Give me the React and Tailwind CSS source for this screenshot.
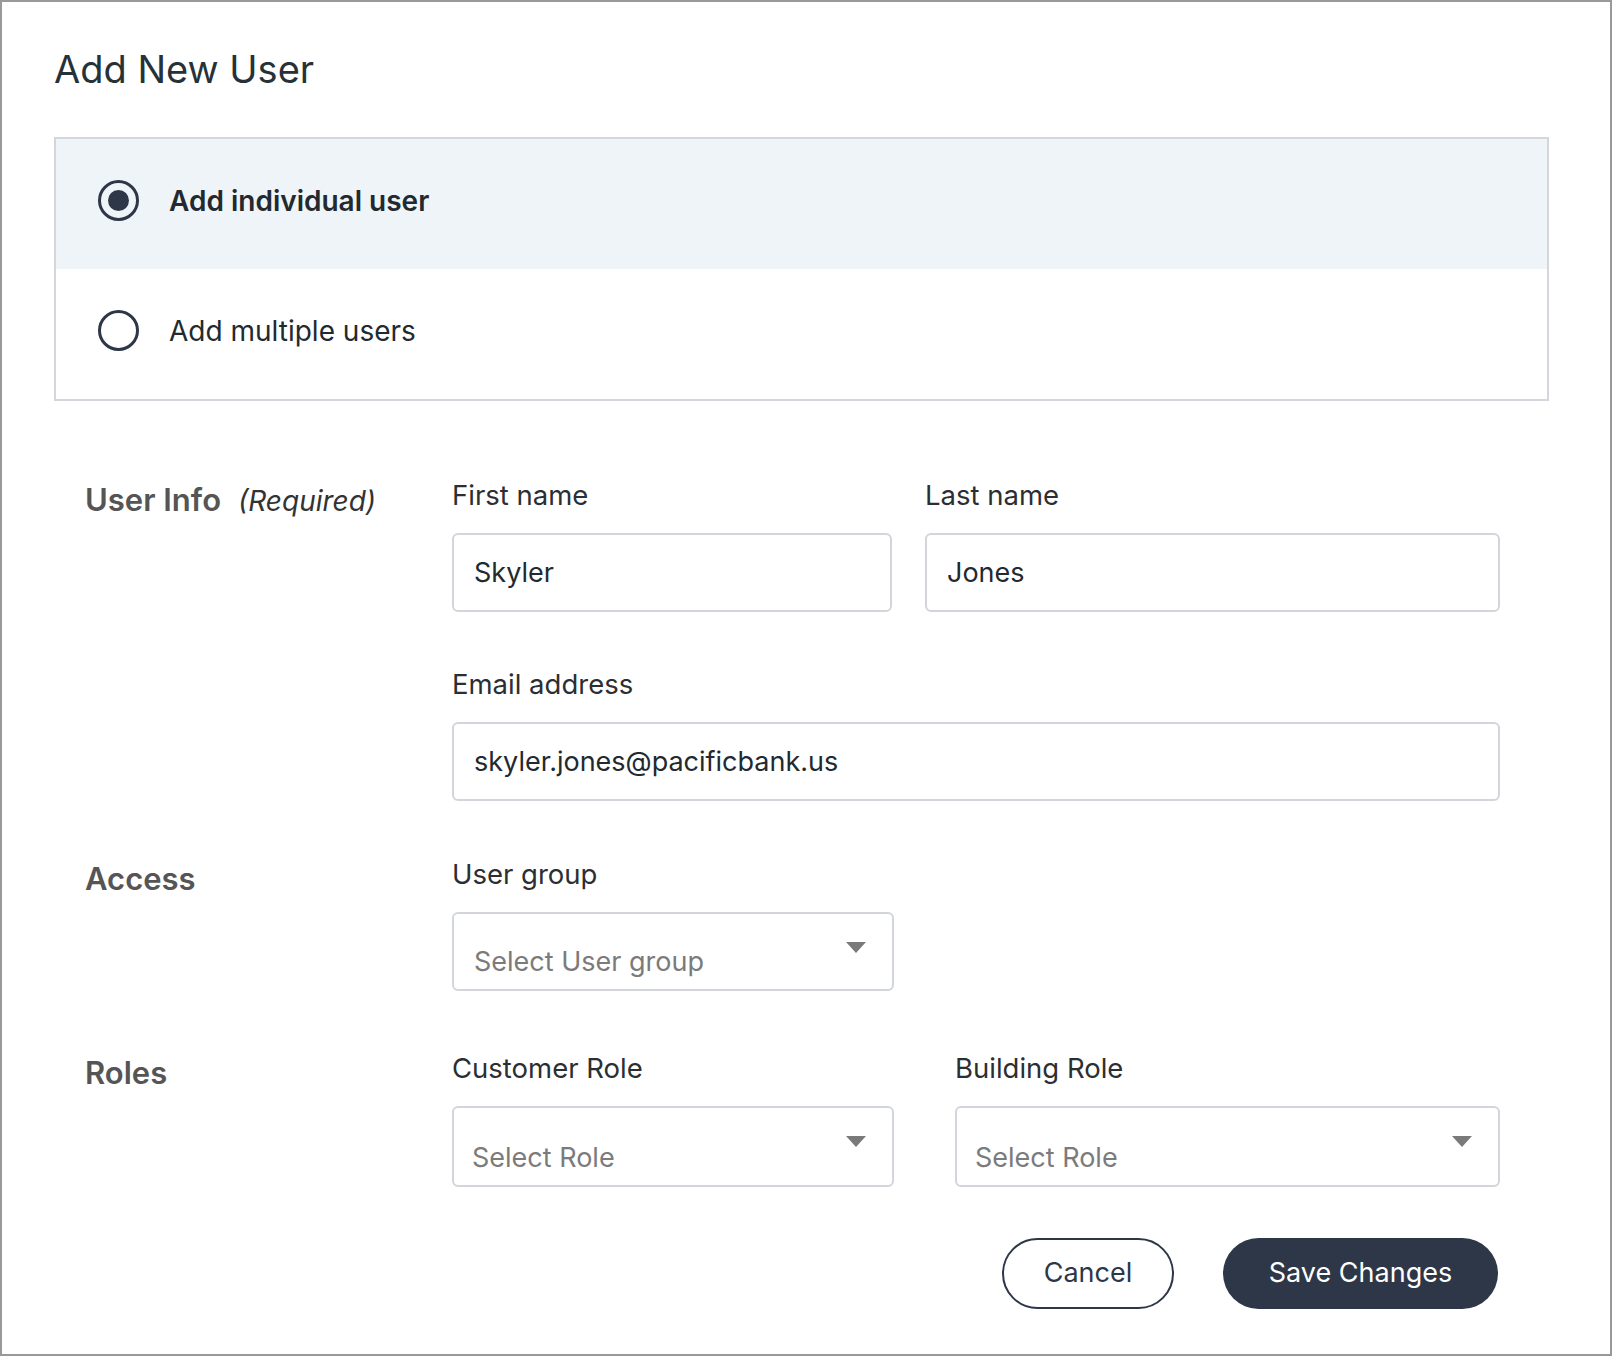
import { useState } from "react";

const Field = ({ label, value, placeholder, select, className, textPad, tall }) => {
  return (
    <div className={className}>
      <div className="text-[27.5px] leading-[36px] text-[#2b2f33]">{label}</div>
      {select ? (
        <div className={"mt-[20px] rounded-[6px] border-2 border-[#d2d6db] bg-white relative flex items-end pb-[9px] " + (tall ? "h-[81px] " : "h-[79px] ") + (textPad || "pl-[20px]")}>
          <span className="text-[27px] leading-[36px] text-[#7b7b7b]">{placeholder}</span>
          <svg className="absolute right-[26px] top-[28px]" width="20" height="12" viewBox="0 0 20 12">
            <polygon points="0,0 20,0 10,11" fill="#7a7a7a" />
          </svg>
        </div>
      ) : (
        <div className="mt-[20px] h-[79px] rounded-[6px] border-2 border-[#d2d6db] bg-white flex items-center pl-[20px]">
          <span className="text-[27px] leading-[36px] text-[#22292f]">{value}</span>
        </div>
      )}
    </div>
  );
};

const Radio = ({ checked, label, onClick }) => {
  return (
    <div
      onClick={onClick}
      className={"h-[130px] flex items-center pl-[42px] pb-[7px] gap-[30px] cursor-pointer " + (checked ? "bg-[#eff4f8]" : "bg-white")}
    >
      <div className="w-[41px] h-[41px] rounded-full border-[3.5px] border-[#2d3748] flex items-center justify-center">
        {checked ? <div className="w-[21px] h-[21px] rounded-full bg-[#2d3748]" /> : ""}
      </div>
      <span className={"text-[28px] text-[#22292f] " + (checked ? "font-semibold" : "font-normal")}>{label}</span>
    </div>
  );
};

const Section = ({ title, note, children }) => {
  return (
    <div className="flex">
      <div className="w-[367px] flex-none pt-[3px]">
        <span className="text-[31px] leading-[40px] font-semibold text-[#555]">{title}</span>
        {note ? <span className="ml-[17px] text-[28px] italic text-[#333]">{note}</span> : ""}
      </div>
      <div className="w-[1048px]">{children}</div>
    </div>
  );
};

export default function App() {
  const [mode, setMode] = useState("individual");

  return (
    <div className="w-[1612px] h-[1356px] border-2 border-[#999] bg-white font-['Inter',sans-serif] pl-[52px] pr-[61px]">
      <h1 className="mt-[44px] text-[38px] leading-[46px] font-normal text-[#263238]">Add New User</h1>

      <div className="mt-[45px] border-2 border-[#d3d6da]">
        <Radio checked={mode === "individual"} label="Add individual user" onClick={() => setMode("individual")} />
        <Radio checked={mode === "multiple"} label="Add multiple users" onClick={() => setMode("multiple")} />
      </div>

      <div className="pl-[31px] mt-[76px]">
        <Section title="User Info" note="(Required)">
          <div className="flex gap-[33px]">
            <Field className="w-[440px]" label="First name" value="Skyler" />
            <Field className="w-[575px]" label="Last name" value="Jones" />
          </div>
          <Field className="mt-[54px]" label="Email address" value="skyler.jones@pacificbank.us" />
        </Section>

        <div className="mt-[55px]">
          <Section title="Access">
            <Field className="w-[442px]" label="User group" select placeholder="Select User group" />
          </Section>
        </div>

        <div className="mt-[59px]">
          <Section title="Roles">
            <div className="flex gap-[61px]">
              <Field className="w-[442px]" label="Customer Role" select tall placeholder="Select Role" textPad="pl-[18px]" />
              <Field className="w-[545px]" label="Building Role" select tall placeholder="Select Role" textPad="pl-[18px]" />
            </div>
          </Section>
        </div>

        <div className="mt-[51px] flex justify-end gap-[49px] w-[1413px]">
          <button className="w-[172px] h-[71px] rounded-full border-2 border-[#2d3748] text-[27px] text-[#2d3748] bg-white">Cancel</button>
          <button className="w-[275px] h-[71px] rounded-full bg-[#2d3748] text-[27px] text-white">Save Changes</button>
        </div>
      </div>
    </div>
  );
}
